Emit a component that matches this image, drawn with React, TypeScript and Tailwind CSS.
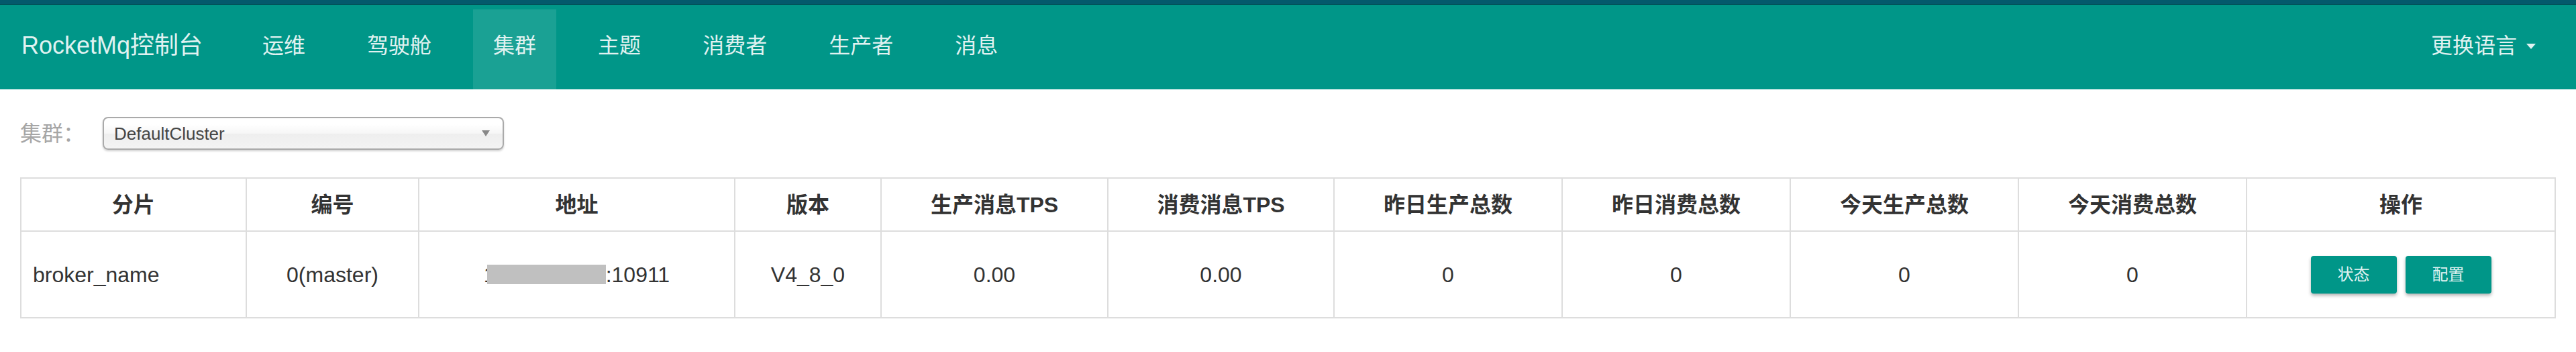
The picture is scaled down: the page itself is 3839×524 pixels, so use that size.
import React from "react";

const navItems = ["运维", "驾驶舱", "集群", "主题", "消费者", "生产者", "消息"];

const headers = [
  "分片",
  "编号",
  "地址",
  "版本",
  "生产消息TPS",
  "消费消息TPS",
  "昨日生产总数",
  "昨日消费总数",
  "今天生产总数",
  "今天消费总数",
  "操作",
];

export default function App() {
  return (
    <div className="min-h-screen bg-white font-[family-name:'Liberation_Sans','Noto_Sans_CJK_SC',sans-serif] text-[#333]">
      <div className="h-[6px] bg-[#04596c]" />
      <div className="h-[1px] bg-[#01424f]" />
      <nav className="flex h-[126px] items-stretch bg-[#009688] pl-[32px] pr-[60px] text-[#e0f2f1]">
        <div className="flex items-center pb-[5px] text-[36px] leading-[36px]">RocketMq控制台</div>
        <ul className="ml-[59px] mt-[7px] flex gap-[32px]">
          {navItems.map((item) => (
            <li key={item} className="flex">
              <a
                className={
                  item === "集群"
                    ? "flex items-center bg-[#1aa194] px-[30px] pb-[12px] text-[32px] leading-[40px]"
                    : "flex items-center px-[30px] pb-[12px] text-[32px] leading-[40px]"
                }
              >
                {item}
              </a>
            </li>
          ))}
        </ul>
        <div className="ml-auto mt-[7px] flex items-center pb-[12px] text-[32px] leading-[40px]">
          <span>更换语言</span>
          <span className="ml-[14px] mt-[2px] inline-block h-0 w-0 border-x-[7px] border-t-[8px] border-x-transparent border-t-[#e0f2f1]" />
        </div>
      </nav>

      <div className="px-[30px] pt-[41px]">
        <div className="flex h-[49px] items-center">
          <span className="w-[123px] text-[32px] leading-[40px] text-[#a6a6a6]">集群：</span>
          <div className="flex h-[49px] w-[598px] items-center justify-between rounded-[8px] border-2 border-[#aaa] bg-[linear-gradient(#fff_20%,#f6f6f6_50%,#eee_52%,#f4f4f4_100%)] pl-[15px] pr-[19px] shadow-[0_2px_3px_rgba(0,0,0,0.18)]">
            <span className="text-[26px] leading-[30px] text-[#444]">DefaultCluster</span>
            <span className="inline-block h-0 w-0 border-x-[6px] border-t-[9px] border-x-transparent border-t-[#888]" />
          </div>
        </div>

        <div className="mt-[41px] grid grid-cols-[334px_257px_471px_218px_338px_337px_340px_340px_340px_340px_460px] border-2 border-[#ddd]">
          {headers.map((h, i) => (
            <div
              key={h}
              className={
                i === 0
                  ? "flex h-[79px] items-center justify-center border-b-2 border-[#ddd] text-[32px] font-bold"
                  : "flex h-[79px] items-center justify-center border-b-2 border-l-2 border-[#ddd] text-[32px] font-bold"
              }
            >
              {h}
            </div>
          ))}

          <div className="flex h-[127px] items-center pl-[17px] text-[32px]">broker_name</div>
          <div className="flex h-[127px] items-center justify-center border-l-2 border-[#ddd] text-[32px]">0(master)</div>
          <div className="flex h-[127px] items-center justify-center border-l-2 border-[#ddd] text-[32px]">
            <span className="inline-flex items-center">
              <span>1</span>
              <span className="relative -ml-[13px] inline-block h-[29px] w-[177px] bg-[#c0c0c0]" />
              <span>:10911</span>
            </span>
          </div>
          <div className="flex h-[127px] items-center justify-center border-l-2 border-[#ddd] text-[32px]">V4_8_0</div>
          <div className="flex h-[127px] items-center justify-center border-l-2 border-[#ddd] text-[32px]">0.00</div>
          <div className="flex h-[127px] items-center justify-center border-l-2 border-[#ddd] text-[32px]">0.00</div>
          <div className="flex h-[127px] items-center justify-center border-l-2 border-[#ddd] text-[32px]">0</div>
          <div className="flex h-[127px] items-center justify-center border-l-2 border-[#ddd] text-[32px]">0</div>
          <div className="flex h-[127px] items-center justify-center border-l-2 border-[#ddd] text-[32px]">0</div>
          <div className="flex h-[127px] items-center justify-center border-l-2 border-[#ddd] text-[32px]">0</div>
          <div className="flex h-[127px] items-center justify-center gap-[13px] border-l-2 border-[#ddd]">
            <button className="h-[56px] w-[128px] rounded-[4px] bg-[#009688] text-[24px] text-[#e0f2f1] shadow-[0_3px_5px_rgba(0,0,0,0.3)]">
              状态
            </button>
            <button className="h-[56px] w-[128px] rounded-[4px] bg-[#009688] text-[24px] text-[#e0f2f1] shadow-[0_3px_5px_rgba(0,0,0,0.3)]">
              配置
            </button>
          </div>
        </div>
      </div>
    </div>
  );
}
